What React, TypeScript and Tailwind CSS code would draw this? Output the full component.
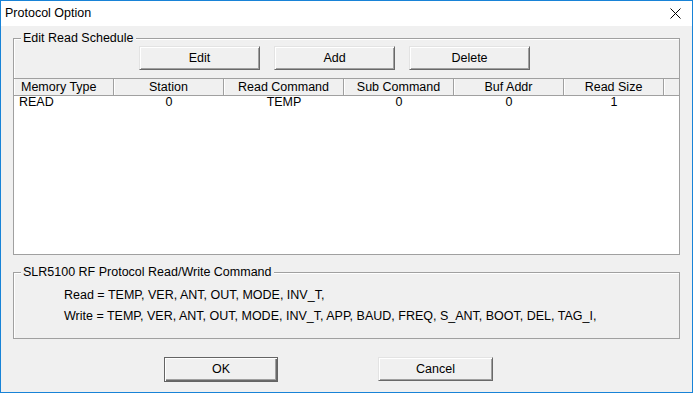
import React from "react";

const columns = [
  { name: "Memory Type", width: "w-[100px]", align: "text-left pl-[7px]" },
  { name: "Station", width: "w-[110px]", align: "text-center" },
  { name: "Read Command", width: "w-[120px]", align: "text-center" },
  { name: "Sub Command", width: "w-[110px]", align: "text-center" },
  { name: "Buf Addr", width: "w-[110px]", align: "text-center" },
  { name: "Read Size", width: "w-[100px]", align: "text-center" },
];

const rows = [["READ", "0", "TEMP", "0", "0", "1"]];

function WinButton({
  label,
  width,
  isDefault,
}: {
  label: string;
  width: string;
  isDefault?: boolean;
}) {
  return (
    <button
      className={
        isDefault
          ? `${width} h-[25px] border border-[#646464] bg-[#f0f0f0] text-[12.5px] leading-none text-black shadow-[inset_1px_1px_0_#ffffff,inset_-1px_-1px_0_#696969,inset_-2px_-2px_0_#a0a0a0]`
          : `${width} h-[24px] border border-t-[#e3e3e3] border-l-[#e3e3e3] border-r-[#696969] border-b-[#696969] bg-[#f0f0f0] text-[12.5px] leading-none text-black shadow-[inset_1px_1px_0_#ffffff,inset_-1px_-1px_0_#a0a0a0]`
      }
    >
      {label}
    </button>
  );
}

function GroupBox({
  title,
  className,
  children,
}: {
  title: string;
  className?: string;
  children: React.ReactNode;
}) {
  return (
    <div
      className={`relative border border-[#a0a0a0] shadow-[inset_1px_1px_0_#ffffff] ${className ?? ""}`}
    >
      <span className="absolute left-[7px] top-[-9px] bg-[#f0f0f0] px-[2px] text-[12.5px] leading-[16px] text-black">
        {title}
      </span>
      {children}
    </div>
  );
}

export default function App() {
  return (
    <div
      className="flex h-[393px] w-[693px] flex-col border border-[#1883d7] bg-[#f0f0f0] text-black"
      style={{ fontFamily: '"Liberation Sans", Arial, sans-serif' }}
    >
      {/* Title bar */}
      <div className="flex h-[25px] shrink-0 items-center justify-between bg-white pl-[4px] pr-[10px]">
        <span className="text-[12.5px]">Protocol Option</span>
        <svg width="11" height="11" viewBox="0 0 11 11" className="mr-[1px]">
          <path d="M0.5 0.5 L10.5 10.5 M10.5 0.5 L0.5 10.5" stroke="#000" strokeWidth="1" />
        </svg>
      </div>

      {/* Body */}
      <div className="flex flex-1 flex-col px-[12px] pt-[12px]">
        <GroupBox title="Edit Read Schedule" className="h-[216px] border-b-0">
          <div className="flex flex-col pt-[7px]">
            <div className="ml-[125px] flex gap-[14px]">
              <WinButton label="Edit" width="w-[121px]" />
              <WinButton label="Add" width="w-[121px]" />
              <WinButton label="Delete" width="w-[121px]" />
            </div>
            <div className="-mx-px mt-[8px] flex h-[177px] flex-col border border-[#a0a0a0] bg-white">
              <div className="flex h-[17px] shrink-0 text-[12.5px] leading-[16px]">
                {columns.map((c) => (
                  <div
                    key={c.name}
                    className={`${c.width} ${c.align} shrink-0 border-r border-b border-r-[#a0a0a0] border-b-[#a0a0a0] bg-[#f0f0f0] shadow-[inset_1px_0_0_#ffffff]`}
                  >
                    {c.name}
                  </div>
                ))}
                <div className="flex-1 border-b border-b-[#a0a0a0] bg-[#f0f0f0] shadow-[inset_1px_0_0_#ffffff]" />
              </div>
              {rows.map((r, i) => (
                <div key={i} className="flex h-[14px] text-[12.5px] leading-[12px]">
                  {r.map((v, j) => (
                    <div
                      key={j}
                      className={`${columns[j].width} shrink-0 ${j === 0 ? "pl-[5px] text-left" : "text-center"}`}
                    >
                      {v}
                    </div>
                  ))}
                </div>
              ))}
            </div>
          </div>
        </GroupBox>

        <GroupBox title="SLR5100 RF Protocol Read/Write Command" className="mt-[18px] h-[67px]">
          <div className="flex flex-col gap-[6px] pl-[50px] pt-[15px] text-[12.5px] leading-[15px]">
            <div>Read = TEMP, VER, ANT, OUT, MODE, INV_T,</div>
            <div>Write = TEMP, VER, ANT, OUT, MODE, INV_T, APP, BAUD, FREQ, S_ANT, BOOT, DEL, TAG_I,</div>
          </div>
        </GroupBox>

        <div className="mt-[18px] flex gap-[100px] pl-[151px]">
          <WinButton label="OK" width="w-[114px]" isDefault />
          <WinButton label="Cancel" width="w-[115px]" />
        </div>
      </div>
    </div>
  );
}
